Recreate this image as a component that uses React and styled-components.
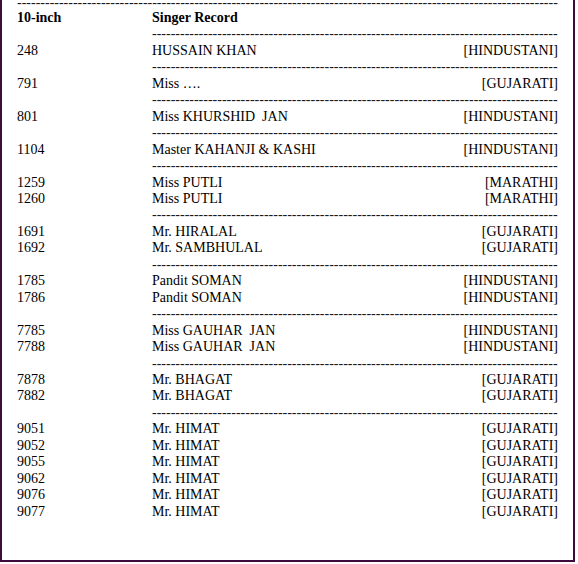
import React from "react";
import styled, { createGlobalStyle } from "styled-components";

const Global = createGlobalStyle`
  html, body { margin: 0; padding: 0; background: #fff; }
  body { font-family: "Liberation Serif", "Times New Roman", serif; color: #000; }
`;

const Page = styled.div`
  box-sizing: border-box;
  width: 575px;
  height: 562px;
  border-left: 2px solid #3e0b3e;
  border-right: 2px solid #3e0b3e;
  border-bottom: 2px solid #3e0b3e;
  padding: 0 15px 0 15px;
  overflow: hidden;
`;

const Table = styled.div`
  display: grid;
  grid-template-columns: 135px 1fr auto;
  font-size: 14px;
  line-height: 16.45px;
`;

const Cell = styled.div`
  white-space: pre;
  font-weight: ${(p) => (p.$bold ? "bold" : "normal")};
  text-align: ${(p) => (p.$right ? "right" : "left")};
`;

const Rule = styled.div`
  grid-column: 2 / 4;
  white-space: nowrap;
  color: #1a1a1a;
`;

const TopRule = styled(Rule)`
  grid-column: 1 / 4;
  height: 10px;
  line-height: 6px;
`;

const groups = [
  [["248", "HUSSAIN KHAN", "[HINDUSTANI]"]],
  [["791", "Miss \u2026.", "[GUJARATI]"]],
  [["801", "Miss KHURSHID  JAN", "[HINDUSTANI]"]],
  [["1104", "Master KAHANJI & KASHI", "[HINDUSTANI]"]],
  [
    ["1259", "Miss PUTLI", "[MARATHI]"],
    ["1260", "Miss PUTLI", "[MARATHI]"],
  ],
  [
    ["1691", "Mr. HIRALAL", "[GUJARATI]"],
    ["1692", "Mr. SAMBHULAL", "[GUJARATI]"],
  ],
  [
    ["1785", "Pandit SOMAN", "[HINDUSTANI]"],
    ["1786", "Pandit SOMAN", "[HINDUSTANI]"],
  ],
  [
    ["7785", "Miss GAUHAR  JAN", "[HINDUSTANI]"],
    ["7788", "Miss GAUHAR  JAN", "[HINDUSTANI]"],
  ],
  [
    ["7878", "Mr. BHAGAT", "[GUJARATI]"],
    ["7882", "Mr. BHAGAT", "[GUJARATI]"],
  ],
  ["9051", "9052", "9055", "9062", "9076", "9077"].map((n) => [n, "Mr. HIMAT", "[GUJARATI]"]),
];

export default function App() {
  return (
    <>
      <Global />
      <Page>
        <Table>
          <TopRule>{"-".repeat(116)}</TopRule>
          <Cell $bold>10-inch</Cell>
          <Cell $bold>Singer Record</Cell>
          <Cell />
          {groups.map((g, gi) => (
            <React.Fragment key={gi}>
              <Rule>{"-".repeat(87)}</Rule>
              {g.map(([num, name, lang]) => (
                <React.Fragment key={num}>
                  <Cell>{num}</Cell>
                  <Cell>{name}</Cell>
                  <Cell $right>{lang}</Cell>
                </React.Fragment>
              ))}
            </React.Fragment>
          ))}
        </Table>
      </Page>
    </>
  );
}
